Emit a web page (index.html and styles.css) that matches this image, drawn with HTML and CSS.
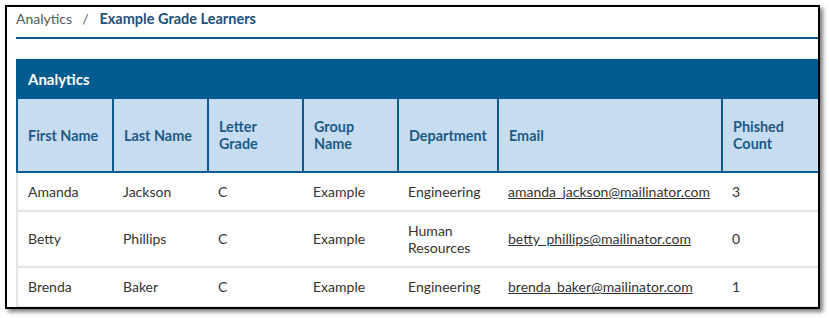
FILE: index.html
```html
<!DOCTYPE html>
<html>
<head>
<meta charset="utf-8">
<link rel="stylesheet" href="styles.css">
</head>
<body>
<div class="frame">
  <div class="crumbs">
    <span class="crumb">Analytics</span>
    <span class="sep">/</span>
    <span class="current">Example Grade Learners</span>
  </div>
  <div class="panel">
    <div class="panel-title">Analytics</div>
    <table class="grid">
      <colgroup>
        <col class="c1"><col class="c2"><col class="c3"><col class="c4"><col class="c5"><col class="c6"><col class="c7">
      </colgroup>
      <thead>
        <tr>
          <th>First Name</th>
          <th>Last Name</th>
          <th>Letter<br>Grade</th>
          <th>Group<br>Name</th>
          <th>Department</th>
          <th>Email</th>
          <th>Phished<br>Count</th>
        </tr>
      </thead>
      <tbody>
        <tr class="r1">
          <td>Amanda</td><td>Jackson</td><td>C</td><td>Example</td><td>Engineering</td>
          <td><a class="mail">amanda_jackson@mailinator.com</a></td><td>3</td>
        </tr>
        <tr class="r2">
          <td>Betty</td><td>Phillips</td><td>C</td><td>Example</td><td>Human<br>Resources</td>
          <td><a class="mail">betty_phillips@mailinator.com</a></td><td>0</td>
        </tr>
        <tr class="r3">
          <td>Brenda</td><td>Baker</td><td>C</td><td>Example</td><td>Engineering</td>
          <td><a class="mail">brenda_baker@mailinator.com</a></td><td>1</td>
        </tr>
      </tbody>
    </table>
  </div>
</div>
</body>
</html>
```

FILE: styles.css
```css
html, body {
  margin: 0;
  padding: 0;
  background: #ffffff;
}
body {
  font-family: Lato, "Open Sans", sans-serif;
  width: 829px;
  height: 318px;
  overflow: hidden;
}
.frame {
  margin: 5px 0 0 5px;
  border: 2px solid #000;
  box-shadow: 3px 3px 4px rgba(0,0,0,0.5);
  padding-left: 9px;
  box-sizing: border-box;
  width: 815px;
  height: 304px;
  overflow: hidden;
  background: #fff;
}
.crumbs {
  display: flex;
  align-items: center;
  height: 22px;
  padding-bottom: 8px;
  border-bottom: 2px solid #0b5c8c;
  font-size: 14px;
}
.crumb {
  color: #4d5b68;
}
.sep {
  color: #4d5b68;
  margin: 0 11px 0 10px;
}
.current {
  color: #1d4f7b;
  font-weight: 700;
  font-size: 14.5px;
}
.panel {
  margin-top: 20px;
  background: #005b8f;
}
.panel-title {
  height: 40px;
  line-height: 40px;
  color: #fff;
  font-weight: 700;
  font-size: 15px;
  padding-left: 12px;
}
.grid {
  border-collapse: collapse;
  table-layout: fixed;
  width: 802px;
  background: #fff;
}
.c1 { width: 96px; }
.c2 { width: 95px; }
.c3 { width: 95px; }
.c4 { width: 95px; }
.c5 { width: 100px; }
.c6 { width: 224px; }
.c7 { width: 97px; }
.grid th {
  background: #c8dcf1;
  color: #1c5a86;
  font-weight: 700;
  font-size: 14.4px;
  line-height: 17px;
  text-align: left;
  height: 73px;
  padding: 0 6px 0 10px;
  border: 2px solid #0b5c8c;
  border-top: 0;
  box-sizing: border-box;
}
.grid td {
  color: #333;
  font-size: 14px;
  line-height: 17px;
  padding: 0 6px 1px 10px;
  border-bottom: 2px solid #e4e4e4;
  vertical-align: middle;
}
.grid td:first-child {
  border-left: 2px solid #e4e4e4;
}
.grid td:last-child {
  border-right: 2px solid #e4e4e4;
}
.r1 td { height: 36px; }
.r2 td { height: 53px; }
.r3 td { height: 37px; }
.mail {
  color: #333;
  text-decoration: underline;
}
```
